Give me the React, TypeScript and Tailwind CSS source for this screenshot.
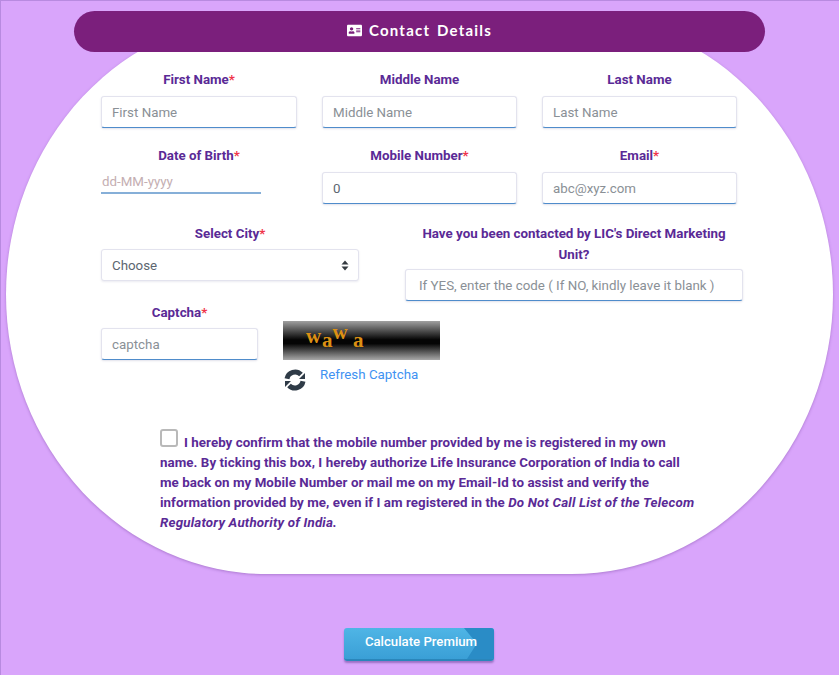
import React from "react";
import { FaAddressCard } from "react-icons/fa";

const inputCls =
  "block w-full h-[32px] px-[10px] pt-[1px] bg-white rounded-[3px] border border-[#e3e3ee] border-b-[#4f8ccb] shadow-[0_1px_2px_rgba(90,90,140,0.18)] font-['Roboto',sans-serif] text-[13.33px] text-[#5c6670] placeholder:text-[#8a9096] outline-none";

function Label({ text, req, cls = "mb-[6px]" }: { text: string; req?: boolean; cls?: string }) {
  return (
    <div className={`text-center text-[13.33px] leading-[21px] font-bold text-[#5a2a96] ${cls}`}>
      {text}
      {req && <span className="text-[#f0344a]">*</span>}
    </div>
  );
}

function Field({ label, req, placeholder, value }: { label: string; req?: boolean; placeholder?: string; value?: string }) {
  return (
    <div>
      <Label text={label} req={req} />
      <input className={inputCls} placeholder={placeholder} defaultValue={value} />
    </div>
  );
}

function RefreshIcon() {
  return (
    <svg width="22" height="22" viewBox="0 0 22 22" className="shrink-0 mt-[3px] ml-[1px]" fill="none">
      <g stroke="#2f3b47" strokeWidth="5">
        <path d="M3 9.8 A8.2 8.2 0 0 1 17 5.6" />
        <path d="M19 12.2 A8.2 8.2 0 0 1 5 16.4" />
      </g>
      <g fill="#2f3b47">
        <path d="M21 4 V10 H15 Z" />
        <path d="M1 18 V12 H7 Z" />
      </g>
    </svg>
  );
}

export default function App() {
  return (
    <div className="h-[675px] w-[839px] overflow-hidden bg-[#d9a5fb] border-t border-l border-[#b88ae0] font-['Roboto',sans-serif]">
      <div className="ml-[5px] mt-[14px] w-[827px] h-[559px] bg-white rounded-[262px/280px] shadow-[0_1px_3px_rgba(90,40,130,0.35)]">
        <div className="mx-[68px] -translate-y-[4px] h-[41px] rounded-[21px] bg-[#7b1f7c] flex items-center justify-center gap-[7px] text-white pb-[2px]">
          <FaAddressCard className="text-[15px]" />
          <span className="font-['Lato',sans-serif] font-bold text-[15px] tracking-[1.2px] [word-spacing:2px]">Contact Details</span>
        </div>

        <div className="pl-[95px] pt-[13px]">
          <div className="grid grid-cols-[196px_195px_195px] gap-x-[25px] gap-y-[17px]">
            <Field label="First Name" req placeholder="First Name" />
            <Field label="Middle Name" placeholder="Middle Name" />
            <Field label="Last Name" placeholder="Last Name" />
            <div>
              <Label text="Date of Birth" req />
              <input
                className="block w-[160px] h-[22px] pl-[1px] pb-[2px] border-b-2 border-[#86afd8] text-[13.33px] text-[#5c6670] placeholder:text-[#c4aeb2] outline-none"
                placeholder="dd-MM-yyyy"
              />
            </div>
            <Field label="Mobile Number" req value="0" />
            <Field label="Email" req placeholder="abc@xyz.com" />
          </div>

          <div className="flex mt-[19px]">
            <div className="w-[258px] shrink-0">
              <Label text="Select City" req cls="mb-[5px]" />
              <div className="relative">
                <select className="block w-full h-[32px] px-[10px] pt-[1px] bg-white rounded-[3px] border border-[#e3e3ee] shadow-[0_1px_2px_rgba(90,90,140,0.12)] text-[13.33px] text-[#5c6670] appearance-none outline-none">
                  <option>Choose</option>
                </select>
                <svg className="absolute right-[10px] top-[11px]" width="8" height="11" viewBox="0 0 8 11">
                  <path d="M4 0.5 L7.5 4.5 H0.5 Z M4 10.5 L0.5 6.5 H7.5 Z" fill="#343a40" />
                </svg>
              </div>
            </div>
            <div className="w-[338px] shrink-0 ml-[46px]">
              <Label text="Have you been contacted by LIC's Direct Marketing Unit?" cls="mb-[4px] px-[10px]" />
              <input
                className={`${inputCls} !px-[13px]`}
                placeholder="If YES, enter the code ( If NO, kindly leave it blank )"
              />
            </div>
          </div>

          <div className="flex mt-[1px]">
            <div className="w-[157px] shrink-0">
              <Label text="Captcha" req cls="mb-[5px]" />
              <input className={inputCls} placeholder="captcha" />
            </div>
            <div className="ml-[25px] mt-[19px]">
              <svg width="157" height="39" viewBox="0 0 157 39" className="block overflow-visible">
                <defs>
                  <linearGradient id="capt" x1="0" y1="0" x2="0" y2="1">
                    <stop offset="0" stopColor="#a0a0a0" />
                    <stop offset="0.48" stopColor="#050505" />
                    <stop offset="0.58" stopColor="#050505" />
                    <stop offset="1" stopColor="#a8a8a8" />
                  </linearGradient>
                </defs>
                <rect width="157" height="39" fill="url(#capt)" />
                <g fill="#dc9013" fontFamily="'Liberation Serif', serif" fontWeight="700" fontSize="21">
                  <text x="23" y="22">w</text>
                  <text x="39" y="26">a</text>
                  <text x="49.6" y="18">w</text>
                  <text x="70" y="26">a</text>
                </g>
              </svg>
              <div className="flex mt-[6px]">
                <RefreshIcon />
                <a className="ml-[14px] text-[13.33px] leading-[18px] text-[#3f92f2] cursor-pointer">Refresh Captcha</a>
              </div>
            </div>
          </div>

          <div className="ml-[59px] mt-[38px] w-[538px] text-[13.33px] leading-[20px] font-bold text-[#5a2a96] tracking-[0.05px]">
            <input
              type="checkbox"
              className="appearance-none inline-block w-[18px] h-[18px] rounded-[3px] border-2 border-[#b9b9b9] bg-white align-[0px] mr-[6px]"
            />
            I hereby confirm that the mobile number provided by me is registered in my own name. By ticking this box, I hereby authorize Life Insurance Corporation of India to call me back on my Mobile Number or mail me on my Email-Id to assist and verify the information provided by me, even if I am registered in the{" "}
            <em className="tracking-[0.2px]">Do Not Call List of the Telecom Regulatory Authority of India.</em>
          </div>
        </div>
      </div>

      <div className="mt-[54px] flex justify-center pr-[2px]">
        <button className="relative w-[150px] h-[33px] pb-[3px] pl-[4px] rounded-[3px] overflow-hidden bg-gradient-to-b from-[#4fb5e6] to-[#3a9fd6] shadow-[0_2px_2px_rgba(80,50,130,0.45)] border-b-2 border-[#2a86bb] text-white text-[13.2px] font-medium">
          <span className="absolute inset-y-0 right-0 w-[30px] bg-[#2a8cc6] [clip-path:polygon(0_0,100%_0,100%_100%,10%_100%,43%_50%)]" />
          <span className="relative">Calculate Premium</span>
        </button>
      </div>
    </div>
  );
}
